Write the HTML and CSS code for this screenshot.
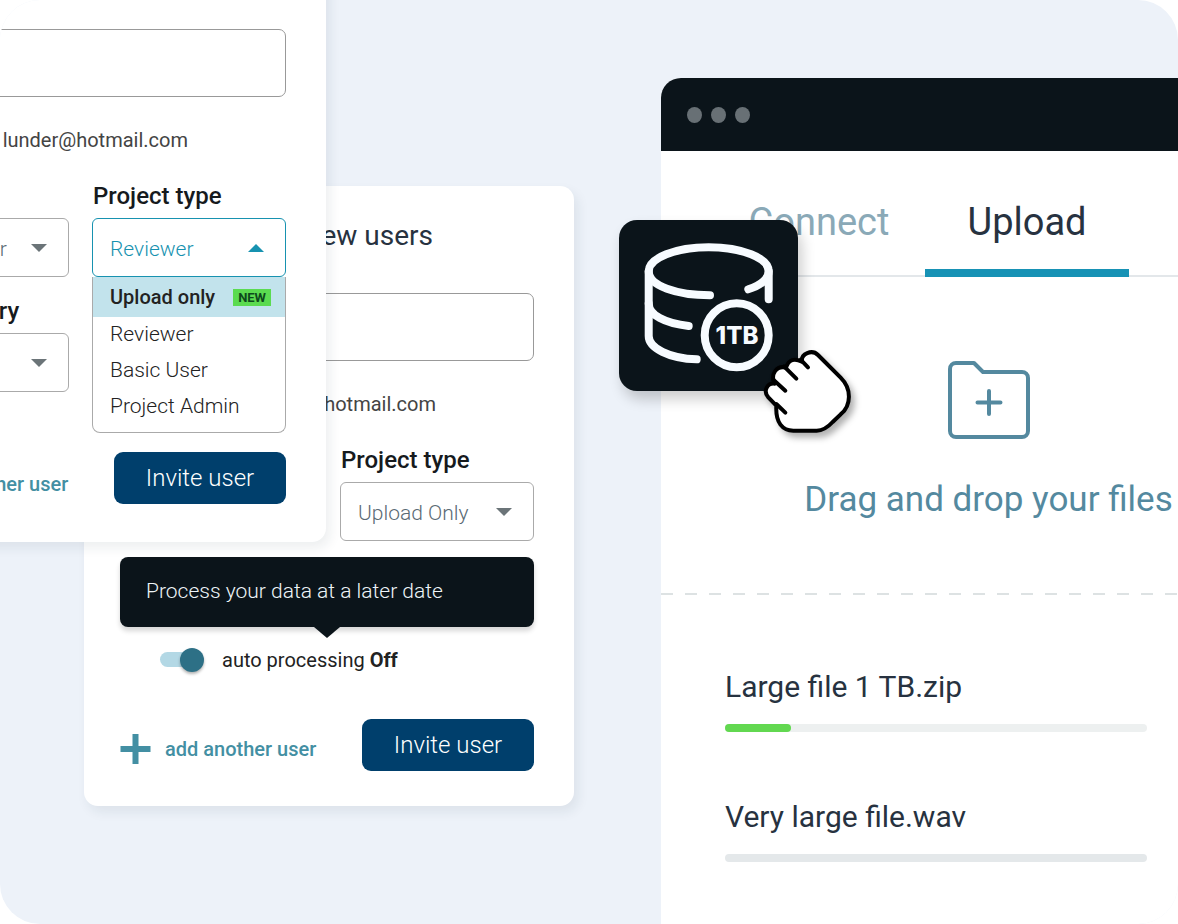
FILE: index.html
```
<!DOCTYPE html>
<html lang="en">

<head>
    <meta charset="UTF-8" />
    <meta name="viewport" content="width=device-width, initial-scale=1.0" />
    <title>Invite users and upload files</title>
    <link rel="stylesheet" href="styles.css">
</head>

<body>
    <main class="stage">
        <section class="people">
            <!-- Back card -->
            <form class="card card-back">
                <h2 class="card-title">Invite new users</h2>
                <input class="text-box" type="text" aria-label="Invite by email">
                <p class="email">lunder@hotmail.com</p>
                <div class="fields">
                    <div class="field">
                        <label for="backRole">User role</label>
                        <div class="select-wrap">
                            <select id="backRole"><option>Member</option></select>
                        </div>
                    </div>
                    <div class="field">
                        <label for="backType">Project type</label>
                        <div class="select-wrap">
                            <select id="backType"><option>Upload Only</option></select>
                            <svg class="caret" viewBox="0 0 16 8"><path d="M0 0h16l-8 8z" /></svg>
                        </div>
                    </div>
                </div>
                <div class="tooltip" role="tooltip">Process your data at a later date</div>
                <div class="toggle-row">
                    <input class="toggle" type="checkbox" id="autoProcessing" checked>
                    <label for="autoProcessing">auto processing <strong>Off</strong></label>
                </div>
                <div class="card-footer">
                    <a class="add-link" href="#">
                        <svg class="plus" viewBox="0 0 30 30"><path d="M15 0v30M0 15h30" /></svg>
                        add another user
                    </a>
                    <button type="button" class="invite-btn">Invite user</button>
                </div>
            </form>

            <!-- Front card -->
            <form class="card card-front">
                <h2 class="card-title">Invite new users</h2>
                <input class="text-box" type="text" aria-label="Invite by email">
                <p class="email">lunder@hotmail.com</p>
                <div class="fields">
                    <div class="field">
                        <label for="role">User role</label>
                        <div class="select-wrap">
                            <select id="role"><option>Team viewer</option></select>
                            <svg class="caret" viewBox="0 0 16 8"><path d="M0 0h16l-8 8z" /></svg>
                        </div>
                    </div>
                    <div class="field">
                        <label for="type">Project type</label>
                        <div class="select-wrap open">
                            <select id="type"><option>Reviewer</option></select>
                            <svg class="caret" viewBox="0 0 16 8"><path d="M0 8h16l-8-8z" /></svg>
                            <div class="menu" role="listbox" aria-label="Project type">
                                <button type="button" role="option" class="option active">Upload only <span class="new">NEW</span></button>
                                <button type="button" role="option" class="option">Reviewer</button>
                                <button type="button" role="option" class="option">Basic User</button>
                                <button type="button" role="option" class="option">Project Admin</button>
                            </div>
                        </div>
                    </div>
                    <div class="field">
                        <label for="country">Invite country</label>
                        <div class="select-wrap">
                            <select id="country"><option>UK</option></select>
                            <svg class="caret" viewBox="0 0 16 8"><path d="M0 0h16l-8 8z" /></svg>
                        </div>
                    </div>
                </div>
                <div class="card-footer">
                    <a class="add-link" href="#">
                        <svg class="plus" viewBox="0 0 30 30"><path d="M15 0v30M0 15h30" /></svg>
                        add another user
                    </a>
                    <button type="button" class="invite-btn">Invite user</button>
                </div>
            </form>
        </section>

        <!-- Upload window -->
        <section class="window">
            <div class="titlebar"><span class="dot"></span><span class="dot"></span><span class="dot"></span></div>
            <nav class="tabs">
                <a class="tab" href="#">Connect</a>
                <a class="tab selected" href="#">Upload</a>
            </nav>
            <div class="dropzone">
                <svg class="folder" viewBox="0 0 82 78">
                    <path d="M2 8a6 6 0 0 1 6-6H26L35 11H74a6 6 0 0 1 6 6V70a6 6 0 0 1-6 6H8a6 6 0 0 1-6-6Z" />
                    <path d="M41 30V53M29.500 41.500h23" />
                </svg>
                <p>Drag and drop your files</p>
            </div>
            <div class="files">
                <div class="file">
                    <label for="zip">Large file 1 TB.zip</label>
                    <progress class="pale" id="zip" value="66" max="422"></progress>
                </div>
                <div class="file">
                    <label for="wav">Very large file.wav</label>
                    <progress id="wav" value="0" max="100"></progress>
                </div>
            </div>

            <!-- Dragged storage tile and hand -->
            <div class="tile">
                <svg class="storage" viewBox="0 0 179 171">
                    <path d="M91 75.300C58 75.300 29.700 66 29.700 51.300C29.700 38 56.600 27.300 89.700 27.300C122.800 27.300 149.700 38 149.700 51.300V79.300" />
                    <path d="M149.700 51.300C149.700 58 143 65 129.300 69.300" />
                    <path d="M29.700 51.300V116C29.700 128 50 138.500 77.700 139.300" />
                    <path d="M29.700 83.400C29.700 95 46 103.500 69.700 106" />
                    <circle cx="117.700" cy="115.300" r="32" />
                    <text x="118" y="124">1TB</text>
                </svg>
                <svg class="hand" viewBox="480 440 300 282">
                    <path d="M529 616L505 591C488 572 502 547 524 550C510 522 530 494 558 502C566 476 584 473 606 484C602 460 636 446 654 464L722 532C755 565 755 614 722 642L698 665C686 678 670 691 650 691H580C548 691 526 668 529 616Z" />
                    <path d="M520 538L556 571M552 498L589 535M602 478L624 501M529 611L556 637" />
                </svg>
            </div>
        </section>
    </main>
</body>

</html>
```
FILE: styles.css
```
body {
    margin: 0;
    background-color: #fff;
    font-family: Roboto, "Liberation Sans", sans-serif;
    font-size: 20px;
    color: #222;
}

.stage {
    display: grid;
    grid-template-columns: 661fr 517fr;
    min-height: 100vh;
    background-color: #edf2f9;
    border-radius: 40px;
    overflow: hidden;
}

.people {
    position: relative;
}

/* Invite cards */
.card {
    position: absolute;
    width: 490px;
    padding: 30px 40px 35px 36px;
    box-sizing: border-box;
    background-color: #fff;
    border-radius: 14px;
    box-shadow: 4px 6px 12px rgba(20, 50, 60, 0.08);
}

.card-back {
    left: 84px;
    top: 186px;
}

.card-front {
    left: -164px;
    top: -78px;
    padding-bottom: 38px;
}

.card-title {
    margin: 0 101px 37px 0;
    font-size: 28px;
    font-weight: 400;
    line-height: 40px;
    text-align: right;
    color: #273240;
}

.text-box {
    display: block;
    width: 100%;
    height: 68px;
    padding: 0 18px;
    box-sizing: border-box;
    border: 1px solid #999;
    border-radius: 7px;
    background-color: #fff;
    font: inherit;
}

.email {
    margin: 29px 98px 28px 0;
    line-height: 28px;
    text-align: right;
    color: #444;
}

.fields {
    display: grid;
    grid-template-columns: 1fr 194px;
    gap: 20px 23px;
}

.field label {
    display: block;
    margin-bottom: 8px;
    padding-left: 1px;
    font-size: 24px;
    font-weight: 500;
    line-height: 28px;
    color: #161a1d;
}

.select-wrap {
    position: relative;
}

.select-wrap select {
    display: block;
    width: 100%;
    height: 59px;
    padding: 2px 18px 0 17px;
    box-sizing: border-box;
    appearance: none;
    border: 1px solid #aaa;
    border-radius: 6px;
    background-color: #fff;
    font: inherit;
    font-size: 21px;
    font-weight: 300;
    color: #5a6a74;
}

.caret {
    position: absolute;
    right: 22px;
    top: 26px;
    width: 16px;
    height: 8px;
    fill: #6b7478;
}

.open select {
    border-color: #1792b0;
    color: #1792b0;
}

.open .caret {
    fill: #1792b0;
}

/* Drop-down list under the open select */
.menu {
    position: absolute;
    top: 100%;
    left: 0;
    right: 0;
    padding-bottom: 7px;
    border: 1px solid #aaa;
    border-top: none;
    border-radius: 0 0 8px 8px;
    background-color: #fff;
}

.option {
    display: flex;
    align-items: center;
    width: 100%;
    height: 36px;
    padding: 0 14px 2px 17px;
    border: none;
    background: none;
    font: inherit;
    font-size: 21px;
    font-weight: 300;
    color: #222;
}

.option.active {
    justify-content: space-between;
    height: 40px;
    padding-bottom: 0;
    background-color: #c2e3ec;
    font-size: 20px;
    font-weight: 500;
}

.new {
    padding: 0 5px;
    background-color: #5bdb50;
    font-size: 13px;
    font-weight: 700;
    line-height: 17px;
    color: #0d4a1c;
}

.tooltip {
    position: relative;
    margin-top: 16px;
    padding: 20px 26px 22px;
    border-radius: 8px;
    background-color: #0b141a;
    box-shadow: 0 4px 5px rgba(0, 0, 0, 0.16);
    font-size: 21px;
    line-height: 28px;
    font-weight: 300;
    color: #eef4f8;
}

.tooltip::after {
    content: "";
    position: absolute;
    left: 50%;
    top: 100%;
    margin-left: -13px;
    border: 13px solid transparent;
    border-top: 11px solid #0b141a;
    border-bottom: none;
}

.toggle-row {
    display: flex;
    align-items: center;
    gap: 18px;
    margin: 19px 0 45px 40px;
    line-height: 28px;
}

.toggle-row strong {
    font-weight: 700;
}

.toggle {
    position: relative;
    width: 44px;
    height: 24px;
    margin: 0;
    appearance: none;
}

.toggle::before {
    content: "";
    position: absolute;
    inset: 4px 4px 5px 0;
    border-radius: 8px;
    background-color: #b3d8e5;
}

.toggle::after {
    content: "";
    position: absolute;
    right: 0;
    width: 24px;
    height: 24px;
    border-radius: 50%;
    background-color: #2d7086;
    box-shadow: 0 2px 3px rgba(0, 0, 0, 0.3);
}

.card-footer {
    display: flex;
    align-items: center;
    justify-content: space-between;
}

.card-front .card-footer {
    margin-top: 60px;
}

.add-link {
    display: flex;
    align-items: center;
    gap: 14px;
    padding-top: 8px;
    font-weight: 500;
    color: #438fa3;
    text-decoration: none;
}

.card-front .add-link {
    padding-top: 12px;
}

.plus {
    width: 31px;
    height: 30px;
    stroke: #438fa3;
    stroke-width: 6;
}

.invite-btn {
    width: 172px;
    height: 52px;
    padding: 0;
    border: none;
    border-radius: 9px;
    background-color: #003f6c;
    font: inherit;
    font-size: 24px;
    font-weight: 300;
    color: #fff;
}

/* Upload window */
.window {
    position: relative;
    margin-top: 78px;
    background-color: #fff;
    border-radius: 20px 0 0 0;
}

.titlebar {
    display: flex;
    align-items: center;
    gap: 9px;
    height: 73px;
    padding-left: 26px;
    background-color: #0b141a;
    border-radius: 20px 0 0 0;
}

.dot {
    width: 15px;
    height: 16px;
    border-radius: 50%;
    background-color: #687075;
}

.tabs {
    display: flex;
    gap: 4px;
    padding-left: 56px;
    border-bottom: 2px solid #e3e7ea;
}

.tab {
    width: 204px;
    margin-bottom: -2px;
    padding: 46px 0 22px;
    border-bottom: 8px solid transparent;
    font-size: 38px;
    line-height: 50px;
    text-align: center;
    color: #8aa9b7;
    text-decoration: none;
}

.tab.selected {
    border-color: #1792b5;
    color: #273240;
}

.dropzone {
    padding: 84px 0 73px 138px;
    background: repeating-linear-gradient(90deg, #dde2e3 0 12px, transparent 12px 24px) left bottom / 100% 2px no-repeat;
    text-align: center;
    color: #54899f;
}

.dropzone p {
    margin: 0;
    font-size: 35px;
    line-height: 44px;
    white-space: nowrap;
}

.folder {
    display: block;
    width: 82px;
    height: 78px;
    margin: 0 auto 39px;
    fill: none;
    stroke: #54899f;
    stroke-width: 4;
    stroke-linecap: round;
    stroke-linejoin: round;
}

.files {
    display: flex;
    flex-direction: column;
    gap: 65px;
    padding: 72px 31px 61px 64px;
}

.file label {
    display: block;
    margin-bottom: 17px;
    font-size: 30px;
    line-height: 40px;
    color: #273240;
}

.file progress {
    display: block;
    width: 100%;
    height: 8px;
    appearance: none;
    border: none;
}

.file progress::-webkit-progress-bar {
    border-radius: 4px;
    background-color: #e4e8ea;
}

.file progress.pale::-webkit-progress-bar {
    background-color: #edf0f0;
}

.file progress::-webkit-progress-value {
    border-radius: 4px;
    background-color: #62d850;
}

/* Tile being dragged over the window */
.tile {
    position: absolute;
    left: -42px;
    top: 142px;
    width: 179px;
    height: 171px;
    border-radius: 18px;
    background-color: #0b141a;
    box-shadow: 4px 8px 14px rgba(0, 0, 0, 0.2);
}

.storage {
    display: block;
    fill: none;
    stroke: #f7fbff;
    stroke-width: 8;
    stroke-linecap: round;
}

.storage text {
    fill: #f7fbff;
    stroke: none;
    font-family: Inter, sans-serif;
    font-size: 24px;
    font-weight: 800;
    text-anchor: middle;
}

.hand {
    position: absolute;
    left: 141px;
    top: 127px;
    width: 100px;
    height: 94px;
    overflow: visible;
    fill: #fff;
    stroke: #000;
    stroke-width: 12;
    stroke-linecap: round;
    stroke-linejoin: round;
    filter: drop-shadow(4px 5px 3px rgba(0, 0, 0, 0.3));
}
```
